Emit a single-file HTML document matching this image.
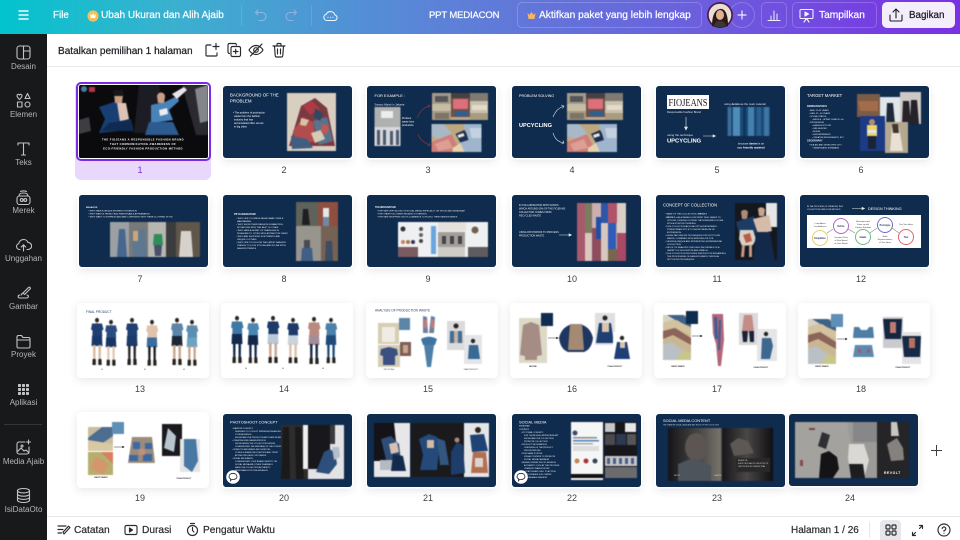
<!DOCTYPE html>
<html><head><meta charset="utf-8"><title>PPT MEDIACON</title>
<style>
*{box-sizing:border-box}
html,body{margin:0;padding:0;width:960px;height:540px;overflow:hidden;background:#fff;font-family:"Liberation Sans",sans-serif}
body{filter:blur(.3px)}
.a{position:absolute;white-space:nowrap}
#top{position:absolute;left:0;top:0;width:960px;height:34px;background:linear-gradient(90deg,#02c4ce 0%,#3bb0cf 18%,#5c83d8 45%,#6a63dc 70%,#7a30e4 100%)}
.tt{color:#fff;font-size:10.1px;line-height:14px;top:9px;-webkit-text-stroke:.2px #fff}
.btn{position:absolute;top:2px;height:26px;border:1px solid rgba(255,255,255,.2);border-radius:5px}
#side{position:absolute;left:0;top:34px;width:47px;height:506px;background:#18191b}
.lb{position:absolute;left:0;width:47px;text-align:center;color:#b4b5b8;font-size:8px;line-height:10px;white-space:nowrap;margin-top:1px}
.ic{position:absolute;left:15px;width:17px;height:17px;fill:none;stroke:#c3c4c6;stroke-width:1.1;stroke-linecap:round;stroke-linejoin:round}
#tb{position:absolute;left:47px;top:34px;width:913px;height:33px;background:#fff;border-bottom:1px solid #e8e9eb}
.ti{position:absolute;top:42px;width:16px;height:16px;fill:none;stroke:#26282c;stroke-width:1.15;stroke-linecap:round;stroke-linejoin:round}
.c{position:absolute;overflow:hidden;border-radius:3px;box-shadow:0 0 0 1.5px #fff,0 3px 9px rgba(50,50,80,.13)}
.c svg{display:block;width:100%;height:100%}
.n{background:#0f2b4d}
.w{background:#fff;border-radius:4px;box-shadow:0 2px 9px rgba(50,50,80,.12)}
.num{position:absolute;width:40px;text-align:center;font-size:9px;line-height:12px;color:#3c3f44}
.b{filter:blur(.45px)}
text{font-family:"Liberation Sans",sans-serif}
#bot{position:absolute;left:47px;top:516px;width:913px;height:24px;background:#fff;border-top:1px solid #e6e7e9}
.bt{position:absolute;top:524px;font-size:10.2px;line-height:13px;color:#2a2c30;-webkit-text-stroke:.2px #2a2c30;white-space:nowrap}
.bi{position:absolute;fill:none;stroke:#2a2c30;stroke-width:1.15;stroke-linecap:round;stroke-linejoin:round}
</style></head><body>

<svg width="0" height="0" style="position:absolute"><defs>
<g id="c1"><rect width="56" height="27" fill="#6d6254"/><rect width="19" height="27" fill="#a59a88"/><rect x="3" y="3" width="13" height="6" fill="#55555a"/><rect y="11" width="19" height="7" fill="#c8bca4"/><rect x="3" y="20" width="14" height="6" fill="#7d7465"/><rect x="19" width="19" height="27" fill="#6f5049"/><rect x="19" width="19" height="5" fill="#454044"/><rect x="21" y="6" width="15" height="10" rx="1" fill="#dd6e7a"/><rect x="23" y="18" width="13" height="5" fill="#2d5f8f"/><rect x="19" y="24" width="19" height="3" fill="#b9a68e"/><rect x="38" width="18" height="27" fill="#c9c1ae"/><rect x="38" width="18" height="8" fill="#807a70"/><rect x="40" y="12" width="15" height="5" fill="#e4dcc9"/><rect x="38" y="20" width="18" height="7" fill="#a89c80"/></g>
<g id="c2"><rect width="50" height="28" fill="#c2ab82"/><path d="M0 0h18l4 10-14 5-8-3z" fill="#a9b8c6"/><path d="M12 0h20v8l-10 3z" fill="#bda77f"/><path d="M0 18l20-8 7 14-6 4H0z" fill="#cf7f78"/><path d="M3 20l14-5 4 9-14 3z" fill="#dd9e94"/><path d="M24 10l9-4 6 10-10 3z" fill="#1f2f4e"/><path d="M26 11l6-2 1 3-6 2z" fill="#e6e6e6"/><path d="M32 0h18v28H30l-3-9 10-3z" fill="#9fb5cd"/><path d="M38 4h12v10H40z" fill="#c3d1e0"/><path d="M21 24l8-5 4 9H21z" fill="#e6d2ac"/></g>
<g id="c3"><rect width="28" height="45" fill="#cbb997"/><path d="M0 0h8l6 4L0 8z" fill="#d8d2c4"/><path d="M4 0h16l8 6v6L14 6z" fill="#3f6288"/><path d="M0 8l14-3 14 9v6L12 12 0 16z" fill="#d2c39e"/><path d="M0 16l12-3 16 10v7L10 20 0 24z" fill="#8c6459"/><path d="M0 24l10-4 18 12v5L8 27 0 30z" fill="#c8b792"/><path d="M0 30l8-3 12 9-8 9H0z" fill="#b9c0c6"/><path d="M12 45l8-9 8 2v7z" fill="#c7c78b"/></g>
<g id="fig"><ellipse cx="0" cy="2.2" rx="2" ry="2.3" fill="#2a2522"/><rect x="-.8" y="4" width="1.6" height="2" fill="#c9a58c"/><path d="M-5 5.500h10l1.500 6-1.500 1 .3 6h-10l.2-6-1.500-1z" style="fill:var(--t)"/><path d="M-5 18h10l.5 10h-11z" style="fill:var(--m)"/><path d="M-4 27h2.600l-.2 15h-2.200zM1.400 27H4l-.2 15H1.600z" style="fill:var(--l)"/><path d="M-4.400 41h3.200v6h-3.400zM1.300 41h3.200l.2 6H1.300z" fill="#24221f"/></g>
</defs></svg>

<div id="top">
<svg class="a" style="left:18px;top:9px" width="11" height="12" fill="none" stroke="#e8fbfb" stroke-width="1.4" stroke-linecap="round"><path d="M1 2h9M1 6h9M1 10h9"/></svg>
<div class="a tt" style="left:53px;font-size:9.800px">File</div>
<svg class="a" style="left:87px;top:10px" width="12" height="12"><circle cx="6" cy="6" r="5.600" fill="#f2c15b"/><path d="M3 4l1.600 1.400L6 3.200l1.400 2.200L9 4l-.7 4H3.700z" fill="#fff"/></svg>
<div class="a tt" style="left:101px">Ubah Ukuran dan Alih Ajaib</div>
<div class="a" style="left:241px;top:5px;width:1px;height:21px;background:rgba(255,255,255,.13)"></div>
<svg class="a" style="left:254px;top:9px" width="14" height="13" fill="none" stroke="#8fb7e0" stroke-width="1.1" stroke-linecap="round" stroke-linejoin="round"><path d="M4 1L1.500 3.500 4 6M2 3.500h6a4 4 0 0 1 0 8H5"/></svg>
<svg class="a" style="left:284px;top:9px" width="14" height="13" fill="none" stroke="#8fb0e0" stroke-width="1.1" stroke-linecap="round" stroke-linejoin="round"><path d="M10 1l2.500 2.500L10 6M12 3.500H6a4 4 0 0 0 0 8h3"/></svg>
<div class="a" style="left:311px;top:5px;width:1px;height:21px;background:rgba(255,255,255,.13)"></div>
<svg class="a" style="left:323px;top:9px" width="15" height="13" fill="none" stroke="#f0f6ff" stroke-width="1.05" stroke-linecap="round" stroke-linejoin="round"><path d="M4 11.500h7.500a2.800 2.800 0 0 0 .4-5.500A4.600 4.600 0 0 0 3.300 5.200 3.200 3.200 0 0 0 4 11.500z"/><path d="M5 8.300h.01M7.500 8.300h.01M10 8.300h.01" stroke-width="1.2"/></svg>
<div class="a tt" style="left:429px;font-size:9.500px;letter-spacing:-.15px">PPT MEDIACON</div>
<div class="btn" style="left:517px;width:185px"></div>
<svg class="a" style="left:527px;top:11px" width="9" height="9"><path d="M.5 2l2 1.700L4.500 1l2 2.700 2-1.700-1 6H1.500z" fill="#f0b46a"/></svg>
<div class="a tt" style="left:539px;font-size:10.200px">Aktifkan paket yang lebih lengkap</div>
<div class="a" style="left:729px;top:2px;width:26px;height:26px;border:1px solid rgba(255,255,255,.2);border-radius:50%"></div>
<svg class="a" style="left:737px;top:10px" width="10" height="10" stroke="#eef" stroke-width="1.2" stroke-linecap="round"><path d="M5 1v8M1 5h8"/></svg>
<svg class="a" style="left:707px;top:2px" width="26" height="26"><circle cx="13" cy="13" r="13" fill="#4e1c4a"/><circle cx="13" cy="13" r="11.300" fill="#e9ded6"/><path d="M5 24c0-6 1-16 8-17s8 10 8 17c-4 2-12 2-16 0z" fill="#2d1a14"/><ellipse cx="13" cy="13" rx="4" ry="5" fill="#dfb092"/><path d="M7 24c1-4 3-5 6-5s5 1 6 5c-3 1.500-9 1.500-12 0z" fill="#3b3537"/></svg>
<div class="btn" style="left:761px;width:26px"></div>
<svg class="a" style="left:767px;top:8px" width="14" height="14" fill="none" stroke="#f0ecff" stroke-width="1" stroke-linecap="round"><path d="M1 12.500h12M4 12V8M7 12V3M10 12V6"/></svg>
<div class="btn" style="left:792px;width:85px"></div>
<svg class="a" style="left:799px;top:8px" width="15" height="15" fill="none" stroke="#f4f1ff" stroke-width="1.1" stroke-linecap="round" stroke-linejoin="round"><path d="M2 1.500h11a1 1 0 0 1 1 1v7a1 1 0 0 1-1 1H2a1 1 0 0 1-1-1v-7a1 1 0 0 1 1-1zM5 14l2.500-3.500L10 14"/><path d="M6 4l3.500 2L6 8z" fill="#f4f1ff"/></svg>
<div class="a tt" style="left:819px;font-size:10.200px">Tampilkan</div>
<div class="a" style="left:882px;top:2px;width:73px;height:26px;background:#f4eefc;border-radius:5px"></div>
<svg class="a" style="left:889px;top:8px" width="14" height="14" fill="none" stroke="#1c1c24" stroke-width="1.1" stroke-linecap="round" stroke-linejoin="round"><path d="M1 7v5a1 1 0 0 0 1 1h10a1 1 0 0 0 1-1V7M7 10V1M4 4l3-3 3 3"/></svg>
<div class="a tt" style="left:909px;color:#1d1d24;-webkit-text-stroke:.25px #1d1d24;font-size:9.800px">Bagikan</div>
</div>

<div id="side">
<svg class="ic" style="top:10px"><rect x="2" y="2" width="13" height="13" rx="2.500"/><path d="M8.500 2v13M8.500 7H15"/></svg>
<div class="lb" style="top:27px">Desain</div>
<svg class="ic" style="top:58px"><path d="M4.500 7.500C3 6 2 5 2 3.700 2 2.500 3.600 1.600 4.500 3c.9-1.400 2.500-.5 2.500.7S6 6 4.500 7.500zM12.500 1.500L15 6.500h-5zM2.500 10h4.500v5H2.500z"/><circle cx="12.500" cy="12.500" r="2.500"/></svg>
<div class="lb" style="top:75px">Elemen</div>
<svg class="ic" style="top:106px"><path d="M3 5V3h11v2M8.500 3v12M6.500 15h4"/></svg>
<div class="lb" style="top:123px">Teks</div>
<svg class="ic" style="top:155px"><rect x="2" y="7" width="13" height="8.500" rx="2.500"/><path d="M4 7c0-2 1-3 4.500-3s4.500 1 4.500 3M5.500 2.500c1-.8 5-.8 6 0"/><circle cx="6.700" cy="11" r="1.400"/><circle cx="10.300" cy="11" r="1.400"/></svg>
<div class="lb" style="top:171px">Merek</div>
<svg class="ic" style="top:202px"><path d="M5 13.500H4.500a3 3 0 0 1-.7-5.900A4.800 4.800 0 0 1 13 6.500a3.300 3.300 0 0 1 .2 7H12M8.500 15V9M6.300 11l2.200-2.200 2.200 2.200"/></svg>
<div class="lb" style="top:219px">Unggahan</div>
<svg class="ic" style="top:250px"><path d="M8 9l5.500-5.500c1-1 2.500.5 1.500 1.500L9.500 10.500zM8 9c-1 .2-1.500 1-1.500 2M12 11c2 .5 2 3-1 3H5c-2.500 0-2.500-3 0-3"/></svg>
<div class="lb" style="top:267px">Gambar</div>
<svg class="ic" style="top:299px"><path d="M2 5V4a1.500 1.500 0 0 1 1.500-1.500h3L8 4.500h5.500A1.500 1.500 0 0 1 15 6v7.500a1.500 1.500 0 0 1-1.500 1.500h-10A1.500 1.500 0 0 1 2 13.500zM2 7h13"/></svg>
<div class="lb" style="top:315px">Proyek</div>
<svg class="ic" style="top:347px;stroke:none;fill:#c3c4c6"><rect x="3" y="3" width="3" height="3" rx=".7"/><rect x="7" y="3" width="3" height="3" rx=".7"/><rect x="11" y="3" width="3" height="3" rx=".7"/><rect x="3" y="7" width="3" height="3" rx=".7"/><rect x="7" y="7" width="3" height="3" rx=".7"/><rect x="11" y="7" width="3" height="3" rx=".7"/><rect x="3" y="11" width="3" height="3" rx=".7"/><rect x="7" y="11" width="3" height="3" rx=".7"/><rect x="11" y="11" width="3" height="3" rx=".7"/></svg>
<div class="lb" style="top:363px">Aplikasi</div>
<div class="a" style="left:4px;top:390px;width:38px;height:1px;background:#333538"></div>
<svg class="ic" style="top:405px"><path d="M10 3H4a2 2 0 0 0-2 2v8a2 2 0 0 0 2 2h8a2 2 0 0 0 2-2V8M2 13l4-4 3 3 2-1 3 3"/><circle cx="7" cy="7" r="1"/><path d="M13.500 1v4M11.500 3h4"/></svg>
<div class="lb" style="top:422px">Media Ajaib</div>
<svg class="ic" style="top:453px"><ellipse cx="8.500" cy="3.700" rx="6" ry="2.200"/><path d="M2.500 3.700v9.600c0 1.200 2.700 2.200 6 2.200s6-1 6-2.200V3.700M2.500 7c0 1.200 2.700 2.200 6 2.200s6-1 6-2.200M2.500 10.200c0 1.200 2.700 2.200 6 2.200s6-1 6-2.200"/></svg>
<div class="lb" style="top:470px">IsiDataOto</div>
</div>

<div id="tb"></div>
<div class="a" style="left:58px;top:44.500px;font-size:10.050px;line-height:13px;color:#1e2024;-webkit-text-stroke:.25px #1e2024">Batalkan pemilihan 1 halaman</div>
<svg class="ti" style="left:204px"><path d="M7 3H3a1 1 0 0 0-1 1v9a1 1 0 0 0 1 1h9a1 1 0 0 0 1-1v-2M12 1.500v6M9 4.500h6"/></svg>
<svg class="ti" style="left:226px"><rect x="5" y="4.500" width="9.500" height="10" rx="1.500"/><path d="M3.500 11.500a1.500 1.500 0 0 1-1.500-1.500V3a1.500 1.500 0 0 1 1.500-1.500H9A1.500 1.500 0 0 1 10.500 3M9.700 7.200v4.600M7.400 9.500h4.600"/></svg>
<svg class="ti" style="left:248px"><path d="M1 8s2.500-4.500 7-4.500S15 8 15 8s-2.500 4.500-7 4.500S1 8 1 8zM2.500 14L14 2"/><circle cx="8" cy="8" r="2.300"/></svg>
<svg class="ti" style="left:271px"><path d="M2 4h12M6 4V2.500A1 1 0 0 1 7 1.500h2a1 1 0 0 1 1 1V4M3.500 4l.7 9.500A1.500 1.500 0 0 0 5.700 15h4.600a1.500 1.500 0 0 0 1.500-1.500L12.500 4M6.500 7v5M9.500 7v5"/></svg>

<!-- selection -->
<div class="a" style="left:75px;top:82px;width:136px;height:98px;background:#e8d8fc;border-radius:6px"></div>
<div class="a" style="left:76px;top:82px;width:135px;height:79px;border:2px solid #7d2ae8;border-radius:5px;background:#fff"></div>
<div class="num" style="left:120px;top:164px;color:#7d2ae8">1</div>

<!-- ROW 1 -->
<div class="c" style="left:79px;top:85px;width:129px;height:73px;background:#0a0a0c;box-shadow:none;border-radius:2px"><svg viewBox="0 0 129 73"><g class="b"><rect width="129" height="73" fill="#0b0b0e"/><path d="M60 0h20l10 48H55z" fill="#1c1c24"/><path d="M103 0h26v50h-12z" fill="#2a2a2f"/><path d="M116 4l13-4v36l-8 2z" fill="#83868a"/><path d="M0 35l10-3 2 14-12 3z" fill="#3d3e42"/><path d="M20 22l18-6 8 16-6 14-20 2 6-14z" fill="#183f73"/><path d="M35 9a5 5 0 0 1 9 1l-1 8-7 0z" fill="#c69d83"/><path d="M34 5h10l1 6H35z" fill="#18171a"/><path d="M38 18h9l3 16-9 3z" fill="#dcc3b6"/><path d="M30 38l22-4 3 12H22z" fill="#102a52"/><path d="M72 20l14-3 12-6 2 5-10 9 4 10-22 3z" fill="#4883b9"/><path d="M78 11a4 4 0 0 1 8 1l-1 6h-6z" fill="#c99e85"/><path d="M80 25l8-2 1 6-8 2z" fill="#eee"/><path d="M70 37h24l6 13H66z" fill="#2d5b8f"/><path d="M93 9l12-7 3 3-10 9z" fill="#e7e6e9"/></g><g fill="#fff" font-size="2.700" font-weight="bold" text-anchor="middle" letter-spacing=".42"><text x="64" y="55.500">THE FIOJEANS A RESPONSIBLE FASHION BRAND</text><text x="64" y="60">THAT COMMUNICATING AWARENESS OF</text><text x="64" y="64.500">ECO-FRIENDLY FASHION PRODUCTION METHOD</text></g><circle cx="5" cy="4" r="3" fill="#4a7aa5" class="b"/><rect x="10" y="2" width="6" height="5" fill="#b4354a" class="b"/></svg></div>
<div class="c n" style="left:223px;top:86px;width:129px;height:72px"><svg viewBox="0 0 129 72"><g fill="#fff"><text x="7" y="10.500" font-size="4.400">BACKGROUND OF THE</text><text x="7" y="16.500" font-size="4.400">PROBLEM</text><g font-size="2.600"><text x="10" y="27.500">• The problem of production</text><text x="11" y="31">waste from the fashion</text><text x="11" y="34.500">industry that has</text><text x="11" y="38">accumulated often occurs</text><text x="11" y="41.500">in big cities</text></g></g><g class="b"><rect x="64" y="7" width="49" height="58" fill="#d9cfc0"/><path d="M66 60l12-40 14-8 12 10 8 38z" fill="#7b3a42"/><path d="M70 45l10-14 10 5 4 20H72z" fill="#b24c4f"/><path d="M80 20l9-5 8 8-10 6z" fill="#b03a44"/><path d="M90 35l14-4 6 24-14 4z" fill="#5a738c"/><path d="M68 50l16 3 6 9-21 1z" fill="#3f5e82"/><path d="M78 32l8 2-3 6-6-1z" fill="#d8c4a3"/><path d="M92 22l8 6-3 7-6-4z" fill="#2f4863"/><path d="M88 47l10-3 4 9-10 4z" fill="#d6cbb6"/><path d="M99 38l7 2-2 8-6-2z" fill="#c45752"/></g></svg></div>
<div class="c n" style="left:367px;top:86px;width:129px;height:72px"><svg viewBox="0 0 129 72"><g fill="#fff"><text x="7.500" y="11" font-size="4">FOR EXAMPLE :</text><text x="7.500" y="19.500" font-size="2.800" fill="#dfe6ee">Sampo Hijrah in Jakarta</text><g font-size="2.500"><text x="35" y="33">Produce</text><text x="35" y="36.500">waste from</text><text x="35" y="40">production</text></g></g><g class="b"><rect x="7.500" y="21" width="26" height="20" fill="#aeb1b0"/><rect x="14" y="25" width="12" height="7" fill="#eceded"/><rect x="7.500" y="41" width="26" height="19" fill="#d6d7da"/><path d="M10 44h3v15h-3zM16 44h3v15h-3zM23 45h3v14h-3zM29 44h3v15h-3z" fill="#4d5b70"/><use href="#c1" x="65" y="7"/><use href="#c2" x="64.500" y="38"/></g><g fill="none" stroke="#8a3340" stroke-width=".7"><path d="M50 32c3-7 7-11 13-12M61 18.500l2 1.500-2.500 1.500M51 48c2 6 6 9 12 11M60.500 60l2.500-1-1-2.500"/></g></svg></div>
<div class="c n" style="left:512px;top:86px;width:129px;height:72px"><svg viewBox="0 0 129 72"><text x="7" y="11" font-size="3.700" fill="#fff">PROBLEM SOLVING</text><text x="7" y="41" font-size="5.600" font-weight="bold" fill="#fff">UPCYCLING</text><g class="b"><use href="#c1" x="55" y="7"/><use href="#c2" x="55" y="38"/></g><g fill="none" stroke="#d6dde6" stroke-width=".6"><path d="M41 31c3-7 6-9 11-11M49 19l3 1-1.500 2.500M41 47c2 6 5 9 11 10M49.500 58l2.500-1-1-2.500"/></g></svg></div>
<div class="c n" style="left:656px;top:86px;width:129px;height:72px"><svg viewBox="0 0 129 72"><rect x="11" y="9" width="42" height="14" fill="#fff"/><text x="12.500" y="20" font-size="10.500" fill="#1a1a20" textLength="39" lengthAdjust="spacingAndGlyphs" style="font-family:'Liberation Serif',serif">FIOJEANS</text><text x="11" y="27" font-size="2.700" fill="#dfe6ee">Responsable Fashion Brand</text><path d="M30 31v12M28.500 41l1.500 3 1.500-3z" stroke="#e3e7ec" stroke-width=".6" fill="#e3e7ec"/><text x="11" y="50" font-size="3" fill="#dfe6ee">using the technique</text><text x="11" y="56.500" font-size="5.800" font-weight="bold" fill="#fff">UPCYCLING</text><path d="M47 50h12M57 48.800l2.500 1.200-2.500 1.200z" stroke="#e3e7ec" stroke-width=".6" fill="#e3e7ec"/><text x="68" y="19" font-size="2.800" fill="#dfe6ee">using <tspan font-weight="bold">denim</tspan> as the main material</text><g class="b"><rect x="71" y="21" width="43" height="29" fill="#1b4a77"/><rect x="72" y="21" width="3" height="29" fill="#3d6f9a"/><rect x="77" y="21" width="7" height="29" fill="#4f8bb8"/><rect x="87" y="21" width="3" height="29" fill="#10365e"/><rect x="92" y="21" width="6" height="29" fill="#447fad"/><rect x="101" y="21" width="4" height="29" fill="#2a6090"/><rect x="108" y="21" width="5" height="29" fill="#3d76a2"/></g><g font-size="2.800" fill="#e8edf2" text-anchor="middle"><text x="95" y="58.500">because <tspan font-weight="bold" fill="#fff">denim</tspan> is an</text><text x="95" y="62.500" font-weight="bold" fill="#fff">eco friendly material</text></g></svg></div>
<div class="c n" style="left:800px;top:86px;width:129px;height:72px"><svg viewBox="0 0 129 72"><text x="7" y="11" font-size="4.200" fill="#fff">TARGET MARKET</text><g fill="#eef1f5" font-size="2.100"><text x="7" y="21" font-weight="bold" font-size="2.400">DEMOGRAPHICS</text><text x="9" y="25">• AGE: 21-35 YEARS</text><text x="9" y="28">• GEN: 25 - 40 YEARS</text><text x="9" y="31">• SOCIAL STATUS</text><text x="12" y="34">• MIDDLE - UPPER CLASS B - A+</text><text x="9" y="37">• PROFESSION</text><text x="12" y="40">• FASHION STYLIST</text><text x="12" y="43">• INFLUENCER</text><text x="12" y="46">• MODEL</text><text x="12" y="49">• ENTERPRENEUR</text><text x="12" y="52">• CREATIVE ENTHUSIASTS, ETC</text><text x="7" y="55.500" font-weight="bold" font-size="2.400">GEOGRAPHY</text><text x="9" y="59.500">• IN A BIG AND DEVELOPED CITY</text><text x="12" y="62.500">• JAKARTA AND SURABAYA</text></g><g class="b"><rect x="57" y="8" width="23" height="23" fill="#7d5c47"/><path d="M58 15h20v10H60z" fill="#a06c4a"/><rect x="80" y="11" width="20" height="27" fill="#dfe7ea"/><path d="M87 17h6l2 21h-9z" fill="#1e2a3a"/><rect x="100" y="6" width="21" height="32" fill="#cfc9c6"/><path d="M103 15h6l2 23h-9zM111 14h6l2 24h-9z" fill="#25222a"/><rect x="60" y="30" width="25" height="35" fill="#1c3b86"/><circle cx="72" cy="36" r="3" fill="#b68a6e"/><rect x="67" y="39" width="10" height="11" fill="#e9d56a"/><rect x="67" y="44" width="10" height="3" fill="#e6e6e6"/><rect x="68" y="50" width="8" height="13" fill="#182338"/><rect x="85" y="36" width="23" height="31" fill="#b5a891"/><path d="M92 41h7l4 24H90z" fill="#e9e1d4"/><path d="M92 38h6l1 9h-6z" fill="#43352b"/></g></svg></div>

<!-- ROW 2 -->
<div class="c n" style="left:79px;top:195px;width:129px;height:72px"><svg viewBox="0 0 129 72"><g fill="#eef1f5" font-size="2.200"><text x="7" y="13" font-weight="bold">BEHAVIOR</text><text x="9" y="16.500">• THEY HAVE A UNIQUE INTEREST IN FASHION</text><text x="9" y="19.500">• THEY WANT A TRENDY AND FASHIONABLE APPEARANCE</text><text x="9" y="22.500">• THEY WANT TO EXPRESS AND ARE CONFIDENT WITH THEIR CLOTHING STYLE</text></g><g class="b"><rect x="31" y="27" width="90" height="35" fill="#8d8d8c"/><rect x="31" y="27" width="19" height="35" fill="#9aa0a3"/><path d="M40 34h6l2 28h-10z" fill="#48678f"/><rect x="50" y="27" width="19" height="35" fill="#777a78"/><path d="M53 36h6l3 26h-8zM60 34h6l2 28h-8z" fill="#5e7891"/><path d="M54 36h5v10h-5z" fill="#c9a77b"/><rect x="69" y="27" width="18" height="35" fill="#b7b6b1"/><path d="M75 39h8l1 11h-10z" fill="#2f8d5a"/><path d="M75 50h8l-1 11h-6z" fill="#4a4f6a"/><rect x="87" y="27" width="10" height="35" fill="#3a3c3e"/><rect x="97" y="27" width="24" height="35" fill="#60564a"/><path d="M102 36h10l2 26h-14z" fill="#d6d2cb"/></g></svg></div>
<div class="c n" style="left:223px;top:195px;width:129px;height:72px"><svg viewBox="0 0 129 72"><g fill="#eef1f5" font-size="2.200"><text x="11" y="20" font-weight="bold" font-size="2.500">PSYCHOGRAPHIC</text><text x="13" y="24">• THEY LIKE TO DRESS FASHIONABLY WHILE</text><text x="14" y="27">MAINTAINING</text><text x="13" y="30">• THEY SHOW THEIR PASSION IN BEAUTIFUL</text><text x="14" y="33">SITUATIONS WITH THE BEST CLOTHES</text><text x="13" y="36">• THEY HAVE A HOBBY OF TRAVELING IN</text><text x="14" y="39">PLEASURE TO CITIES WITH ATTRACTIVE VIEWS</text><text x="13" y="42">• THEY ARE SHOPPING FOR TRENDY AND</text><text x="14" y="45">UNIQUE CLOTHES</text><text x="13" y="48">• THEY LIKE TO FOLLOW THE LATEST FASHION</text><text x="14" y="51">TRENDS TO LOOK STYLISH AND IN LINE WITH</text><text x="14" y="54">FASHION TRENDS</text></g><g class="b"><rect x="73" y="7" width="42" height="59" fill="#6f5a50"/><rect x="95" y="7" width="20" height="24" fill="#8f4f40"/><rect x="73" y="7" width="22" height="24" fill="#5f6258"/><path d="M80 14h5l2 16h-8z" fill="#1f1f22"/><path d="M100 13h6v9h-6z" fill="#e7e7e7"/><path d="M100 22h6v9h-6z" fill="#6f8aa8"/><rect x="73" y="31" width="25" height="35" fill="#98948e"/><path d="M81 45h6v10h-6z" fill="#4a4a55"/><path d="M79 53h10l1 13H78z" fill="#3f5f86"/><rect x="98" y="31" width="17" height="35" fill="#766155"/><path d="M103 46h6l1 20h-8z" fill="#3b4c63"/></g></svg></div>
<div class="c n" style="left:367px;top:195px;width:129px;height:72px"><svg viewBox="0 0 129 72"><g fill="#eef1f5" font-size="2.100"><text x="8" y="13" font-weight="bold" font-size="2.400">TECHNOGRAPHIC</text><text x="10" y="16.500">• THEY ARE VERY ACTIVE ON SOCIAL MEDIA, ESPECIALLY ON TIKTOK AND INSTAGRAM</text><text x="10" y="19.500">• THEY HAVE FOLLOWERS RELATED TO FASHION</text><text x="10" y="22.500">• THEY ARE SHOPPING ONLY E-COMMERCE TO FULFILL THEIR FASHION NEEDS</text></g><g class="b"><rect x="31" y="27" width="90" height="35" fill="#eff0f1"/><circle cx="36" cy="34" r="2.500" fill="#333"/><g fill="#c5845f"><circle cx="36" cy="47" r="2"/><circle cx="41" cy="47" r="2" fill="#a74"/><circle cx="46" cy="47" r="2" fill="#335"/></g><rect x="31" y="52" width="20" height="10" fill="#7b5b60"/><circle cx="54" cy="34" r="2" fill="#555"/><circle cx="54" cy="40" r="2" fill="#666"/><circle cx="54" cy="46" r="2" fill="#444"/><rect x="64" y="31" width="5" height="28" fill="#6aa6dd"/><rect x="71" y="27" width="28" height="9" fill="#e5e1dc"/><rect x="71" y="37" width="27" height="25" fill="#a3a09c"/><path d="M75 41h4v8h-4zM83 41h4v8h-4zM91 41h4v8h-4z" fill="#454344"/><rect x="71" y="52" width="27" height="10" fill="#cfccc7"/><circle cx="108" cy="35" r="3.500" fill="#72604f"/><rect x="101" y="52" width="20" height="10" fill="#5f5b5e"/></g></svg></div>
<div class="c n" style="left:512px;top:195px;width:129px;height:72px"><svg viewBox="0 0 129 72"><g fill="#e9edf2" font-size="2.400"><text x="7" y="11">IN COLLABORATION WITH DANVIS</text><text x="7" y="14.500">WHICH AROUND 60% OF THE FIOJEANS</text><text x="7" y="18">COLLECTION COMES FROM</text><text x="7" y="21.500">RECYCLED WASTE</text><text x="7" y="38">USING PATCHWORK TO PROCESS</text><text x="7" y="41.500">PRODUCTION WASTE</text></g><path d="M47 40h12M57 38.800l2.500 1.200-2.500 1.200z" stroke="#e3e7ec" stroke-width=".6" fill="#e3e7ec"/><g class="b"><rect x="65" y="8" width="49" height="58" fill="#b9a6a0"/><rect x="65" y="8" width="8" height="58" fill="#a65a6c"/><rect x="73" y="8" width="7" height="30" fill="#7c7d60"/><rect x="73" y="38" width="7" height="28" fill="#d9c7c0"/><rect x="80" y="8" width="9" height="25" fill="#ccb0b0"/><rect x="80" y="33" width="9" height="33" fill="#8d4d5d"/><rect x="84" y="22" width="6" height="22" fill="#214ea8"/><rect x="89" y="8" width="7" height="20" fill="#2e55a8"/><rect x="96" y="28" width="8" height="26" fill="#2e5cb8"/><rect x="89" y="28" width="7" height="38" fill="#d8c7bf"/><rect x="96" y="8" width="9" height="20" fill="#b05468"/><rect x="96" y="54" width="9" height="12" fill="#76654f"/><rect x="105" y="8" width="9" height="30" fill="#d9cfc7"/><rect x="105" y="38" width="9" height="28" fill="#a84a63"/></g></svg></div>
<div class="c n" style="left:656px;top:195px;width:129px;height:72px"><svg viewBox="0 0 129 72"><text x="7" y="11.500" font-size="4.100" fill="#fff">CONCEPT OF COLLECTION</text><g fill="#e9edf2" font-size="2.150"><text x="9" y="19.500">• NAME OF THIS COLLECTION = <tspan font-weight="bold">REVOLT</tspan></text><text x="9" y="23">• <tspan font-weight="bold">REVOLT</tspan> = AS A REBELLIOUS SPIRIT WHO DARES TO</text><text x="11" y="26">OPPOSE, DIVERGE OUTSIDE THE NORM AND IS DONE</text><text x="11" y="29">WITH A POSITIVE THINKING.</text><text x="9" y="32">• THIS COLLECTION ALSO ADOPTS A REVERSIBLE</text><text x="11" y="35">STREETWEAR STYLE TO SHOW FREEDOM OF</text><text x="11" y="38">EXPRESSION.</text><text x="9" y="41">• USING PATCHWORK TECHNIQUES FOR UPCYCLING</text><text x="11" y="44">WASTE, COMBINED WITH BRIDGING OR DYE</text><text x="9" y="47">• DESIGN A UNIQUE AND INTERESTING EXPERIMENTAL</text><text x="11" y="50">COLLECTION.</text><text x="9" y="53">• REVOLT IS REALIZED THROUGH THE DETAILS OF A</text><text x="11" y="56">VARIETY OF SILHOUETTE AND RIBBON.</text><text x="9" y="59">• THIS COLLECTION PROVIDES INSTRUCTION REGARDING</text><text x="11" y="62">THE PROCESSING OF FASHION WASTE THROUGH</text><text x="11" y="65">UPCYCLING TECHNIQUES.</text></g><g class="b"><rect x="79" y="8" width="42" height="57" fill="#15171f"/><rect x="110" y="8" width="11" height="24" fill="#e6e6e6"/><path d="M85 17a4 4 0 0 1 7 0l-1 7h-5z" fill="#b08a72"/><path d="M80 27l18-6 3 18H83z" fill="#1c3c66"/><path d="M84 35h13l3 9-3 6-11 1-3-7z" fill="#d9d1c7"/><path d="M87 40l7-2 2 8-6 2z" fill="#b85e4a"/><path d="M86 50h3l-1 12h-3zM93 50h3v12h-3z" fill="#c19b85"/><path d="M102 14a4 4 0 0 1 7 1l-1 6h-5z" fill="#c8a58c"/><path d="M97 24l16-4 3 16-14 3z" fill="#d6bba9"/><path d="M100 37h14l5 28H97z" fill="#12294a"/></g></svg></div>
<div class="c n" style="left:800px;top:195px;width:129px;height:72px"><svg viewBox="0 0 129 72"><g fill="#e9edf2" font-size="2"><text x="7" y="12">IN THE PROCESS OF CREATING THIS</text><text x="7" y="15">COLLECTION USING THE METHOD</text></g><path d="M52 13.500h12M62 12.300l2.500 1.200-2.500 1.200z" stroke="#e3e7ec" stroke-width=".6" fill="#e3e7ec"/><text x="68" y="15" font-size="3.800" fill="#fff">DESIGN THINKING</text><rect x="7" y="20" width="114" height="33" fill="#fff"/><g fill="#fff" stroke-width="1"><circle cx="20" cy="43" r="7.500" stroke="#e3d16a"/><circle cx="41" cy="31" r="7.500" stroke="#b164c9"/><circle cx="63" cy="42" r="7.500" stroke="#6bbb84"/><circle cx="85" cy="30" r="7.500" stroke="#6a6fc9"/><circle cx="106" cy="42" r="7.500" stroke="#e0656a"/></g><g font-size="2.300" fill="#2b2e5a" text-anchor="middle" font-weight="bold"><text x="20" y="44">Empathize</text><text x="41" y="32">Define</text><text x="63" y="43">Ideate</text><text x="85" y="31">Prototype</text><text x="106" y="43">Test</text></g><g font-size="2" fill="#333" text-anchor="middle"><text x="20" y="29">Learn About</text><text x="20" y="32">Your Audience</text><text x="41" y="43">Construct Point</text><text x="41" y="46">of View Based</text><text x="41" y="49">on User Needs</text><text x="63" y="27">Brainstorm and</text><text x="63" y="30">Come up with</text><text x="63" y="33">Creative Solutions</text><text x="85" y="42">Build</text><text x="85" y="45">Representations</text><text x="85" y="48">of Your Ideas</text><text x="106" y="30">Test Your Ideas</text></g><path d="M27 38l6-4M48 34l7 4M70 38l7-5M92 33l7 5" stroke="#333" stroke-width=".4"/></svg></div>

<!-- ROW 3 -->
<div class="c w" style="left:77px;top:303px;width:132px;height:75px"><svg viewBox="0 0 132 75"><text x="9" y="10" font-size="3.200" fill="#1e3a5f">FINAL PRODUCT</text><g class="b">
<use href="#fig" transform="translate(20 15)" style="--t:#1f3f73;--m:#18386b;--l:#d9b9a0"/>
<use href="#fig" transform="translate(34 17) scale(.97)" style="--t:#2a4c7e;--m:#163563;--l:#e2c8b5"/>
<use href="#fig" transform="translate(55 15)" style="--t:#1f4072;--m:#1a3a69;--l:#2b2a2e"/>
<use href="#fig" transform="translate(75 17) scale(.97)" style="--t:#e0c3aa;--m:#3b6ca0;--l:#1b1d22"/>
<use href="#fig" transform="translate(100 15)" style="--t:#5c85a9;--m:#1b2735;--l:#c8a58c"/>
<use href="#fig" transform="translate(115 17) scale(.97)" style="--t:#5b8db0;--m:#6ea1c2;--l:#c8a58c"/></g>
<g font-size="1.800" fill="#333" text-anchor="middle"><text x="25" y="67">01</text><text x="68" y="67">02</text><text x="107" y="67">03</text></g></svg></div>
<div class="c w" style="left:221px;top:303px;width:132px;height:75px"><svg viewBox="0 0 132 75"><g class="b">
<use href="#fig" transform="translate(16 13)" style="--t:#3d78a7;--m:#13294b;--l:#13294b"/>
<use href="#fig" transform="translate(32 15) scale(.96)" style="--t:#4b86b3;--m:#12284a;--l:#12284a"/>
<use href="#fig" transform="translate(52 13)" style="--t:#1d3a69;--m:#b8c9d8;--l:#c8a58c"/>
<use href="#fig" transform="translate(72 15) scale(.96)" style="--t:#1d3a69;--m:#c8d5df;--l:#d9bfa9"/>
<use href="#fig" transform="translate(93 14)" style="--t:#b98a80;--m:#a58d98;--l:#192a44"/>
<use href="#fig" transform="translate(110 15) scale(.96)" style="--t:#4c81ab;--m:#1f4a7b;--l:#1c4a78"/></g>
<g font-size="1.800" fill="#333" text-anchor="middle"><text x="25" y="66">04</text><text x="62" y="66">05</text><text x="102" y="66">06</text></g></svg></div>
<div class="c w" style="left:366px;top:303px;width:132px;height:75px"><svg viewBox="0 0 132 75"><text x="9" y="8.500" font-size="3.200" fill="#1e3a5f">ANALYSIS OF PRODUCTION WASTE</text><g class="b"><rect x="12" y="20" width="21" height="21" fill="#d6cdb3"/><path d="M16 24h13v15H16z" fill="#f0ece3"/><rect x="33" y="15" width="11" height="12" fill="#5c86a8"/><rect x="12" y="42" width="22" height="22" fill="#d4cdb5"/><path d="M15 46l8-2 8 2 1 6-3 1v9H17v-9l-3-1z" fill="#3b4f82"/><rect x="34" y="39" width="11" height="14" fill="#7e5f55"/><rect x="37" y="42" width="5" height="8" fill="#c9a48e"/><path d="M57 13l4 1 1 16h-5zM65 13l4 1-1 16h-5z" fill="#6f7fa0"/><path d="M58 17h3v8h-3zM65 17h3v8h-3z" fill="#c47e78"/><path d="M55 36c5-3 11-3 16 0l-2 6h-12z" fill="#3f73a2"/><path d="M58 42h10l-3 22h-4z" fill="#4d7fa8"/><rect x="81" y="18" width="18" height="29" fill="#dbdbdd"/><circle cx="90" cy="23" r="2.500" fill="#2a2522"/><path d="M84 28h12l1 12H83z" fill="#cdb0a0"/><path d="M84 28h4v12h-4zM92 28h4v12h-4z" fill="#3c6f99"/><rect x="98" y="32" width="18" height="29" fill="#e5e5e7"/><circle cx="107" cy="38" r="2.200" fill="#2a2522"/><path d="M103 42h9l2 14H102z" fill="#386a94"/></g><g font-size="1.800" fill="#333" text-anchor="middle"><text x="23" y="67">UPCYCLING</text><text x="105" y="67">FINAL PRODUCT</text></g></svg></div>
<div class="c w" style="left:510px;top:303px;width:132px;height:75px"><svg viewBox="0 0 132 75"><g class="b"><rect x="9" y="15" width="28" height="45" fill="#dcd9c6"/><path d="M13 22l8-3 8 3 3 30-5 1v4H15v-4l-5-1z" fill="#a58c85"/><rect x="31" y="10" width="12" height="13" fill="#0f2b4d"/><path d="M49 35c2-9 8-13 14-14h6c6 1 12 5 14 14-1 8-4 12-9 14H58c-5-2-8-6-9-14z" fill="#1e3660"/><path d="M60 21h12l2 26H58z" fill="#a38a72"/><rect x="85" y="10" width="20" height="32" fill="#dfdfe1"/><circle cx="95" cy="15" r="2.500" fill="#2a2522"/><path d="M89 20h12l3 20H86z" fill="#1f3f73"/><path d="M92 20h7v9h-7z" fill="#dcc3ac"/><rect x="103" y="29" width="19" height="31" fill="#fff"/><circle cx="112" cy="35" r="2.200" fill="#2a2522"/><path d="M107 39h10l3 17H104z" fill="#1e3f75"/><path d="M110 39h5v6h-5z" fill="#dcc3ac"/></g><path d="M38 35h10M46.500 34l1.700 1-1.700 1z" stroke="#333" stroke-width=".5"/><g font-size="1.800" fill="#333" text-anchor="middle" font-weight="bold"><text x="23" y="64">BEFORE</text><text x="105" y="64">FINAL PRODUCT</text></g></svg></div>
<div class="c w" style="left:654px;top:303px;width:132px;height:75px"><svg viewBox="0 0 132 75"><g class="b"><use href="#c3" x="9" y="12"/><rect x="32" y="8" width="12" height="13" fill="#0f2b4d"/><path d="M58 11h11l1 26-3 26h-3l-2-22-3-10z" fill="#b36578"/><path d="M60 14h3l1 22h-3zM65 17h2l-1 30h-2z" fill="#3a5f94"/><rect x="85" y="10" width="19" height="32" fill="#dad9db"/><path d="M90 12h8l2 16H88z" fill="#c58c85"/><path d="M88 28h6l-1 11h-4zM95 28h5v11h-4z" fill="#1b2238"/><rect x="103" y="26" width="20" height="32" fill="#e5e5e7"/><circle cx="112" cy="31" r="2.200" fill="#2a2522"/><path d="M108 35h9l2 8-3 13H107z" fill="#3c6890"/></g><path d="M38 33h10M46.500 32l1.700 1-1.700 1z" stroke="#333" stroke-width=".5"/><g font-size="1.800" fill="#333" text-anchor="middle" font-weight="bold"><text x="24" y="64">WASTE FABRIC</text><text x="107" y="65">FINAL PRODUCT</text></g></svg></div>
<div class="c w" style="left:798px;top:303px;width:132px;height:75px"><svg viewBox="0 0 132 75"><g class="b"><use href="#c3" x="10" y="16"/><rect x="33" y="11" width="12" height="13" fill="#5f8fb5"/><path d="M56 24h5l2 3 6 0 2-3h4l1 11H55z" fill="#4e7ea5"/><path d="M57 42h17l2 12H55z" fill="#5a8bb2"/><rect x="60" y="46" width="3" height="4" fill="#b0555f"/><rect x="69" y="46" width="3" height="4" fill="#b0555f"/><rect x="85" y="14" width="20" height="31" fill="#c9cbcf"/><path d="M85 16h19l-1 20H87z" fill="#142640"/><rect x="92" y="19" width="6" height="11" fill="#c07a6f"/><rect x="104" y="29" width="19" height="32" fill="#e4e4e6"/><path d="M104 33h19l-1 21h-16z" fill="#162a46"/><rect x="111" y="35" width="6" height="10" fill="#b8705f"/></g><path d="M39 36h10M47.500 35l1.700 1-1.700 1z" stroke="#333" stroke-width=".5"/><g font-size="1.800" fill="#333" text-anchor="middle" font-weight="bold"><text x="24" y="64">WASTE FABRIC</text><text x="105" y="65">FINAL PRODUCT</text></g></svg></div>

<!-- ROW 4 -->
<div class="c w" style="left:77px;top:412px;width:132px;height:76px"><svg viewBox="0 0 132 76"><g class="b"><rect x="11" y="15" width="25" height="24" fill="#c9bd9f"/><path d="M11 26l14-11h11v9L14 39h-3z" fill="#4d6d90"/><path d="M11 28l25 4v7H11z" fill="#d9c9a3"/><rect x="11" y="40" width="25" height="23" fill="#b6ae6c"/><path d="M18 44l14 8-6 11-12-6z" fill="#d4966d"/><path d="M24 40l12 12v-12z" fill="#d97f5f"/><rect x="35" y="10" width="12" height="12" fill="#5f8fb5"/><path d="M55 25h20l3 26H51z" fill="#9a8b7a"/><path d="M56 30h7v7h-7zM68 31h7v6h-7zM52 43h9v6h-9zM66 42h9v7h-9z" fill="#3d68a4"/><path d="M62 37h6v6h-6z" fill="#c18f7a"/><rect x="85" y="12" width="20" height="32" fill="#1a1a1e"/><path d="M91 16l8 8-2 16-10-4z" fill="#b8c5cf"/><rect x="103" y="27" width="20" height="33" fill="#e4e4e6"/><path d="M107 27h12l2 22-6 11-8-6z" fill="#4777a3"/></g><path d="M37 35h10M45.500 34l1.700 1-1.700 1z" stroke="#333" stroke-width=".5"/><g font-size="1.800" fill="#333" text-anchor="middle" font-weight="bold"><text x="24" y="66">WASTE FABRIC</text><text x="107" y="67">FINAL PRODUCT</text></g></svg></div>
<div class="c n" style="left:223px;top:414px;width:129px;height:73px"><svg viewBox="0 0 129 73"><text x="7" y="9.500" font-size="3.900" fill="#fff">PHOTOSHOOT CONCEPT</text><g fill="#e9edf2" font-size="2"><text x="9" y="15">• NARROW CONCEPT:</text><text x="12" y="18">DESIGNED TO COLLECT IMPRESSIONS AMONG</text><text x="12" y="21">YOUR AUDIENCE</text><text x="12" y="24">SHOWCASE THE PRODUCTS AND THEIR DETAILS</text><text x="9" y="27">• CREATIVE MIND MANIFESTATION:</text><text x="12" y="30">SHOWCASING THE COLLECTION DESIGN</text><text x="12" y="33">COMMUNICATE THE MESSAGE OF THE CONCEPT</text><text x="9" y="36">• VISIBILITY AND BRAND RECOGNITION:</text><text x="12" y="39">TO BUILD BRAND RECOGNITION AND TRUST</text><text x="12" y="42">ATTRACTING NEW CUSTOMERS</text><text x="9" y="45">• VISUAL RELEVANCE:</text><text x="12" y="48">COMMUNICATE YOUR BRAND IDENTITY ON</text><text x="12" y="51">SOCIAL MEDIA AND OTHER CHANNELS</text><text x="12" y="54">MAKE THE COLLECTION AUTHENTIC</text><text x="12" y="57">MEMORABLE FOR THE AUDIENCE</text></g><g class="b"><rect x="58" y="11" width="63" height="54" fill="#16161a"/><rect x="58" y="11" width="27" height="54" fill="#2e2c2c"/><path d="M60 13h6l1 52h-9zM72 13h6l3 52H73z" fill="#1a1a1b"/><rect x="80" y="11" width="6" height="44" fill="#efefef"/><rect x="85" y="11" width="22" height="48" fill="#18181c"/><rect x="107" y="11" width="14" height="54" fill="#e3e3e5"/><path d="M107 11h5v19h-5z" fill="#3a3a3e"/><rect x="85" y="55" width="36" height="10" fill="#e3e3e6"/><path d="M101 38l6-3 5 4 2 11-8 10-13-2z" fill="#2d4f7c"/><path d="M109 33h7l1 10-6 3z" fill="#b4bfca"/></g></svg></div>
<div class="c n" style="left:367px;top:414px;width:129px;height:73px"><svg viewBox="0 0 129 73"><g class="b"><rect x="7" y="9" width="115" height="54" fill="#1a1a1d"/><rect x="7" y="9" width="36" height="54" fill="#e7e7e9"/><path d="M7 9h20l3 28-10 10-13 0z" fill="#141418"/><path d="M14 25l10-3 8 8 2 17-14 3z" fill="#2e4c75"/><path d="M22 30l8-2 2 10-8 2z" fill="#d6c0b0"/><path d="M13 46h16v10H13z" fill="#b3bac1"/><path d="M26 40l10 2 3 15H24z" fill="#142a4d"/><rect x="43" y="9" width="1" height="54" fill="#0f2b4d"/><path d="M52 25l10-5 8 3 2 13-2 20H53l3-15z" fill="#234a7a"/><path d="M60 26h7v8h-7z" fill="#d4b9a5"/><path d="M70 24l8 3 4 24H73z" fill="#32567f"/><rect x="97" y="9" width="25" height="54" fill="#e5e6e8"/><path d="M84 38l6-10 6 3 2 28-14 2z" fill="#1e3d6a"/><circle cx="90" cy="26" r="2.500" fill="#a88870"/><circle cx="111" cy="16" r="3" fill="#322620"/><path d="M103 21l14-1 4 17-16 1z" fill="#1f4474"/><path d="M106 38h13l2 21H104z" fill="#b46f52"/><path d="M108 44h8v9h-8z" fill="#dcd5cd"/></g></svg></div>
<div class="c n" style="left:512px;top:414px;width:129px;height:73px"><svg viewBox="0 0 129 73"><text x="7" y="9.500" font-size="3.900" fill="#fff">SOCIAL MEDIA</text><g fill="#e9edf2" font-size="2"><text x="7" y="12.500" font-size="1.800">INSTAGRAM</text><text x="7" y="16">CONTENT:</text><text x="9" y="19">• PICTORIAL CONCEPT:</text><text x="12" y="22">FOR THOSE WHO APPRECIATE ART</text><text x="12" y="25">SHOWCASE THE COLLECTION</text><text x="12" y="28">PROMOTE COLLECTION</text><text x="9" y="31">• PRODUCT INFORMATION:</text><text x="12" y="34">OVERVIEW OF THE PRODUCT</text><text x="12" y="37">SPECIFICATIONS</text><text x="9" y="40">• PURCHASE POSTER:</text><text x="12" y="43">VISUAL POSTERS TO PROMOTE</text><text x="12" y="46">SOCIAL MEDIA CAMPAIGN</text><text x="9" y="49">• BEHIND SCENES PHOTO SESSION:</text><text x="12" y="52">AUTHENTIC LOOK AT THE PROCESS</text><text x="12" y="55">CREATIVE TEAM AT WORK</text><text x="9" y="58">• EDUCATION AND CALL TO ACTION:</text><text x="12" y="61">ENCOURAGES FOLLOWERS</text><text x="12" y="64">SUSTAINABLE FASHION</text></g><g class="b"><rect x="59" y="8" width="32" height="58" fill="#f6f6f7"/><circle cx="63" cy="19" r="2.500" fill="#3a4d66"/><rect x="61" y="23" width="24" height="1.500" fill="#888"/><rect x="61" y="26" width="26" height="1.500" fill="#4a7fb5"/><rect x="61" y="29" width="20" height="1.500" fill="#aaa"/><rect x="61" y="32" width="26" height="5" fill="#ddd"/><circle cx="65" cy="47" r="2.500" fill="#b85"/><circle cx="74" cy="47" r="2.500" fill="#a33"/><circle cx="83" cy="47" r="2.500" fill="#345"/><rect x="59" y="60" width="32" height="4" fill="#111"/><rect x="92" y="8" width="33" height="56" fill="#17171b"/><rect x="93" y="9" width="10" height="9" fill="#c8c8ca"/><rect x="113" y="9" width="11" height="9" fill="#e8e8ea"/><rect x="93" y="20" width="10" height="11" fill="#4a4a4f"/><rect x="104" y="20" width="10" height="11" fill="#2c3a52"/><rect x="115" y="20" width="9" height="11" fill="#55555a"/><rect x="93" y="42" width="32" height="10" fill="#c6c7cb"/><path d="M95 44h3v6h-3zM101 44h3v6h-3zM107 44h3v6h-3zM113 44h3v6h-3zM119 44h3v6h-3z" fill="#4a5f85"/><rect x="93" y="53" width="32" height="11" fill="#6c6c6f"/></g></svg></div>
<div class="c n" style="left:656px;top:414px;width:129px;height:73px"><svg viewBox="0 0 129 73"><text x="7" y="8" font-size="3.900" fill="#fff">SOCIAL MEDIA CONTENT</text><text x="7" y="11.500" font-size="1.700" fill="#cfd7e0">THE CREATIVE VISUAL LANGUAGE AND MOOD OF THE COLLECTION</text><g class="b"><defs><linearGradient id="mgz" x1="0" x2="1" y1="0" y2="0"><stop offset="0" stop-color="#151518"/><stop offset=".3" stop-color="#4a4846"/><stop offset=".5" stop-color="#77726c"/><stop offset=".52" stop-color="#171719"/><stop offset=".75" stop-color="#4a4746"/><stop offset="1" stop-color="#0f0f12"/></linearGradient></defs><rect x="12" y="14" width="105" height="53" fill="url(#mgz)"/><ellipse cx="40" cy="33" rx="11" ry="14" fill="#5d5551"/><path d="M22 50l15-6 18 8v15H22z" fill="#4d545c"/><path d="M74 30l8-6 10 3 6 12-20 3z" fill="#5e5854"/><rect x="80" y="44" width="34" height="14" fill="#2a2929"/></g><g font-size="1.600" fill="#d4d4d4"><text x="82" y="47">BEHIND THE</text><text x="82" y="50">EVERY PIECE HAS ITS OWN STORY OF</text><text x="82" y="53">THE PROCESS BY CREATIVE TEAM</text><text x="18" y="62">REVOLT</text><text x="58" y="62">CHAPTER</text></g></svg></div>
<div class="c n" style="left:789px;top:414px;width:129px;height:72px"><svg viewBox="0 0 129 72"><g class="b"><rect x="6" y="8" width="114" height="56" fill="#9b9a97"/><path d="M6 8h52l10 56H6z" fill="#a3a29f"/><path d="M33 18l8 3-4 14-8-3z" fill="#2f2f33"/><rect x="64" y="8" width="24" height="20" fill="#87878a"/><rect x="88" y="8" width="32" height="56" fill="#252528"/><path d="M102 8h6l2 14h-8z" fill="#c9c6c0"/><path d="M98 30l10-6 6 10 1 12-13 1z" fill="#85827e"/><path d="M32 40l8-3 8 6 2 12-6 9H30z" fill="#141416"/><path d="M60 30h15l5 16-5 18H62l-3-20z" fill="#dad8d4"/><path d="M60 50h14l2 14H62z" fill="#1d1d1f"/><rect x="11" y="46" width="3" height="6" fill="#8a4a4a"/><rect x="20" y="14" width="6" height="2" fill="#7a3f3f"/></g><text x="95" y="60" font-size="3.400" fill="#fff" font-weight="bold" letter-spacing=".55">REVOLT</text></svg></div>

<!-- comment bubbles -->
<svg class="a" style="left:226px;top:470px" width="14" height="14"><circle cx="7" cy="7" r="6.800" fill="#fff"/><path d="M3 6.500C3 4.500 5 3.300 7 3.300s4 1.200 4 3.200-2 3-4 3c-.5 0-1 0-1.400-.1L4.500 10.800v-2C3.500 8.300 3 7.500 3 6.500z" fill="#fff" stroke="#1f2730" stroke-width=".8"/></svg>
<svg class="a" style="left:514px;top:470px" width="14" height="14"><circle cx="7" cy="7" r="6.800" fill="#fff"/><path d="M3 6.500C3 4.500 5 3.300 7 3.300s4 1.200 4 3.200-2 3-4 3c-.5 0-1 0-1.400-.1L4.500 10.800v-2C3.500 8.300 3 7.500 3 6.500z" fill="#fff" stroke="#1f2730" stroke-width=".8"/></svg>

<!-- numbers -->
<div class="num" style="left:264px;top:164px">2</div><div class="num" style="left:408px;top:164px">3</div><div class="num" style="left:552px;top:164px">4</div><div class="num" style="left:697px;top:164px">5</div><div class="num" style="left:841px;top:164px">6</div>
<div class="num" style="left:120px;top:273px">7</div><div class="num" style="left:264px;top:273px">8</div><div class="num" style="left:408px;top:273px">9</div><div class="num" style="left:552px;top:273px">10</div><div class="num" style="left:697px;top:273px">11</div><div class="num" style="left:841px;top:273px">12</div>
<div class="num" style="left:120px;top:383px">13</div><div class="num" style="left:264px;top:383px">14</div><div class="num" style="left:408px;top:383px">15</div><div class="num" style="left:552px;top:383px">16</div><div class="num" style="left:697px;top:383px">17</div><div class="num" style="left:841px;top:383px">18</div>
<div class="num" style="left:120px;top:492px">19</div><div class="num" style="left:264px;top:492px">20</div><div class="num" style="left:408px;top:492px">21</div><div class="num" style="left:552px;top:492px">22</div><div class="num" style="left:697px;top:492px">23</div><div class="num" style="left:830px;top:492px">24</div>

<svg class="a" style="left:930px;top:444px" width="13" height="13" stroke="#3c3f44" stroke-width="1"><path d="M6.500 1v11M1 6.500h11"/></svg>

<div id="bot"></div>
<svg class="bi" style="left:57px;top:524px" width="14" height="12"><path d="M1 2h8M1 5.500h5M1 9h3.500M7 10l6-6.500-1.500-1.300-5.500 6z"/></svg>
<div class="bt" style="left:74px">Catatan</div>
<svg class="bi" style="left:124px;top:524px" width="14" height="12"><rect x="1" y="1.500" width="12" height="9" rx="1.500"/><path d="M5.500 4l3 2-3 2z" fill="#2a2c30"/></svg>
<div class="bt" style="left:142px">Durasi</div>
<svg class="bi" style="left:186px;top:522px" width="13" height="15"><circle cx="6.500" cy="8.500" r="5"/><path d="M4.500 1.500h4M6.500 5.500v3l1.500 1.500"/></svg>
<div class="bt" style="left:203px;font-size:10.100px">Pengatur Waktu</div>
<div class="bt" style="left:791px;font-size:10px">Halaman 1 / 26</div>
<div class="a" style="left:869px;top:522px;width:1px;height:16px;background:#e6e7e9"></div>
<div class="a" style="left:880px;top:520px;width:21px;height:20px;background:#e5e7ea;border-radius:4px 4px 0 0"></div>
<svg class="bi" style="left:885px;top:524px" width="12" height="12"><rect x="1" y="1" width="4" height="4" rx="1"/><rect x="7" y="1" width="4" height="4" rx="1"/><rect x="1" y="7" width="4" height="4" rx="1"/><rect x="7" y="7" width="4" height="4" rx="1"/></svg>
<svg class="bi" style="left:911px;top:524px" width="13" height="13"><path d="M8.500 1.500h3V4.500M11.500 1.500L8.500 4.500M4.500 11.500h-3V8.500M1.500 11.500L4.500 8.500"/></svg>
<svg class="bi" style="left:937px;top:523px" width="14" height="14"><circle cx="7" cy="7" r="6"/><path d="M5.200 5.500A1.800 1.800 0 1 1 7 7.500v.8M7 10.300h.01"/></svg>
</body></html>
